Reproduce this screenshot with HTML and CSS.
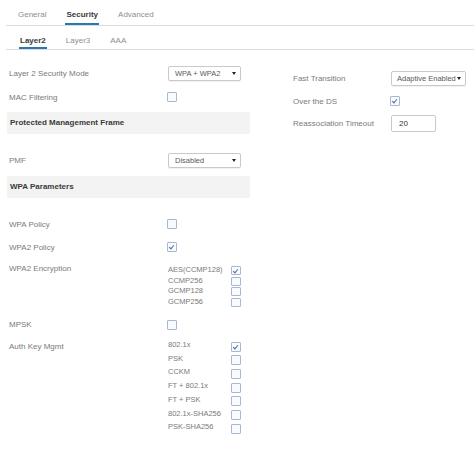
FILE: index.html
```html
<!DOCTYPE html>
<html lang="en">
<head>
    <meta charset="UTF-8">
    <title>WLAN Security</title>
    <link rel="stylesheet" href="styles.css">
</head>
<body>

<div class="tabs">
    <span class="tab">General</span>
    <span class="tab active">Security</span>
    <span class="tab">Advanced</span>
</div>
<div class="subtabs">
    <span class="subtab active">Layer2</span>
    <span class="subtab">Layer3</span>
    <span class="subtab">AAA</span>
</div>

<div class="content">
    <div class="col-left">
        <div class="row r-mode">
            <span class="label">Layer 2 Security Mode</span>
            <span class="select">WPA + WPA2</span>
        </div>
        <div class="row r-mac">
            <span class="label">MAC Filtering</span>
            <span class="check"></span>
        </div>
        <div class="band b-pmf">Protected Management Frame</div>
        <div class="row r-pmf">
            <span class="label">PMF</span>
            <span class="select">Disabled</span>
        </div>
        <div class="band b-wpa">WPA Parameters</div>
        <div class="row r-wpa">
            <span class="label">WPA Policy</span>
            <span class="check"></span>
        </div>
        <div class="row r-wpa2">
            <span class="label">WPA2 Policy</span>
            <span class="check on"></span>
        </div>
        <div class="row list-row r-enc">
            <span class="label">WPA2 Encryption</span>
            <ul class="opts enc">
                <li><span>AES(CCMP128)</span><span class="check on"></span></li>
                <li><span>CCMP256</span><span class="check"></span></li>
                <li><span>GCMP128</span><span class="check"></span></li>
                <li><span>GCMP256</span><span class="check"></span></li>
            </ul>
        </div>
        <div class="row r-mpsk">
            <span class="label">MPSK</span>
            <span class="check"></span>
        </div>
        <div class="row list-row r-akm">
            <span class="label">Auth Key Mgmt</span>
            <ul class="opts akm">
                <li><span>802.1x</span><span class="check on"></span></li>
                <li><span>PSK</span><span class="check"></span></li>
                <li><span>CCKM</span><span class="check"></span></li>
                <li><span>FT + 802.1x</span><span class="check"></span></li>
                <li><span>FT + PSK</span><span class="check"></span></li>
                <li><span>802.1x-SHA256</span><span class="check"></span></li>
                <li><span>PSK-SHA256</span><span class="check"></span></li>
            </ul>
        </div>
    </div>

    <div class="col-right">
        <div class="row r-ft">
            <span class="label">Fast Transition</span>
            <span class="select wide">Adaptive Enabled</span>
        </div>
        <div class="row r-ds">
            <span class="label">Over the DS</span>
            <span class="check on"></span>
        </div>
        <div class="row r-timeout">
            <span class="label">Reassociation Timeout</span>
            <span class="textbox">20</span>
        </div>
    </div>
</div>

</body>
</html>
```

FILE: styles.css
```css
body {
    margin: 0;
    font-family: "Liberation Sans", Arial, sans-serif;
    font-size: 8px;
    color: #7a7a7a;
    background-color: white;
}
.tabs {
    display: flex;
    gap: 20px;
    margin-left: 6px;
    padding-left: 12px;
    border-bottom: 1px solid #dcdcdc;
}
.tab {
    padding: 10px 0 3px;
    line-height: 10px;
    border-bottom: 2px solid transparent;
    color: #8e8e8e;
}
.tab.active {
    color: #3a3a3a;
    font-weight: bold;
    border-bottom-color: #2578b0;
    margin: 0 -1px;
    padding-left: 1px;
    padding-right: 1px;
}
.subtabs {
    display: flex;
    gap: 18px;
    margin-left: 6px;
    padding-left: 13px;
    border-bottom: 1px solid #dcdcdc;
}
.subtab {
    padding: 10px 1px 1px;
    line-height: 10px;
    border-bottom: 2px solid transparent;
    color: #8e8e8e;
}
.subtab.active {
    color: #3a3a3a;
    font-weight: bold;
    border-bottom-color: #2578b0;
}
.content {
    display: flex;
    gap: 41px;
    padding-left: 7px;
}
.col-left {
    width: 243px;
    display: flex;
    flex-direction: column;
}
.col-right {
    display: flex;
    flex-direction: column;
}
.row {
    display: flex;
    align-items: center;
    height: 18px;
    padding-left: 2px;
}
.col-left .label {
    width: 159px;
}
.col-right .label {
    width: 98px;
}
.r-mode { margin-top: 14px; }
.r-mac { margin-top: 6px; }
.b-pmf { margin-top: 6px; }
.r-pmf { margin-top: 17px; }
.b-wpa { margin-top: 7px; }
.r-wpa { margin-top: 17px; }
.r-wpa2 { margin-top: 5px; }
.r-enc { margin-top: 8px; }
.r-mpsk { margin-top: 9px; }
.r-akm { margin-top: 4px; }
.r-ft { margin-top: 19px; }
.r-ds { margin-top: 5px; }
.r-timeout { margin-top: 4px; }
.band {
    height: 22px;
    line-height: 22px;
    padding-left: 3px;
    background-color: #f3f3f3;
    color: #3a3a3a;
    font-weight: bold;
}
.select {
    position: relative;
    box-sizing: border-box;
    width: 73px;
    height: 15px;
    line-height: 13px;
    padding-left: 6px;
    border: 1px solid #c9c9c9;
    border-radius: 2px;
    background-color: white;
    color: #5a5a5a;
    font-size: 7.5px;
    box-shadow: 0 1px 1px rgba(0, 0, 0, 0.06);
}
.select::after {
    content: "";
    position: absolute;
    right: 4px;
    top: 5px;
    border-left: 2px solid transparent;
    border-right: 2px solid transparent;
    border-top: 3px solid #222;
}
.select.wide {
    width: 75px;
    padding-left: 5px;
}
.textbox {
    box-sizing: border-box;
    width: 45px;
    height: 17px;
    line-height: 15px;
    padding-left: 7px;
    border: 1px solid #c9c9c9;
    border-radius: 2px;
    color: #333;
    font-size: 8px;
}
.check {
    position: relative;
    box-sizing: border-box;
    width: 10px;
    height: 10px;
    margin-left: -1px;
    border: 1px solid #a8b8d0;
    border-radius: 1px;
    background-color: #f8fafd;
}
.check.on::after {
    content: "";
    position: absolute;
    left: 2px;
    top: 1px;
    width: 2px;
    height: 4px;
    border-right: 1px solid #4d6f9c;
    border-bottom: 1px solid #4d6f9c;
    transform: rotate(40deg);
}
.list-row {
    height: auto;
    align-items: flex-start;
}
.opts {
    list-style: none;
    margin: 0;
    padding: 0;
    font-size: 7.5px;
}
.opts li {
    display: flex;
    align-items: center;
}
.opts li span:first-child {
    width: 64px;
}
.enc li {
    height: 10.7px;
}
.enc .check {
    height: 9px;
    margin-top: 2px;
}
.r-enc .label {
    line-height: 10.7px;
}
.akm li {
    height: 13.7px;
}
.akm .check {
    margin-top: 4px;
}
.r-akm .label {
    margin-top: 2px;
    line-height: 13.7px;
}
```
